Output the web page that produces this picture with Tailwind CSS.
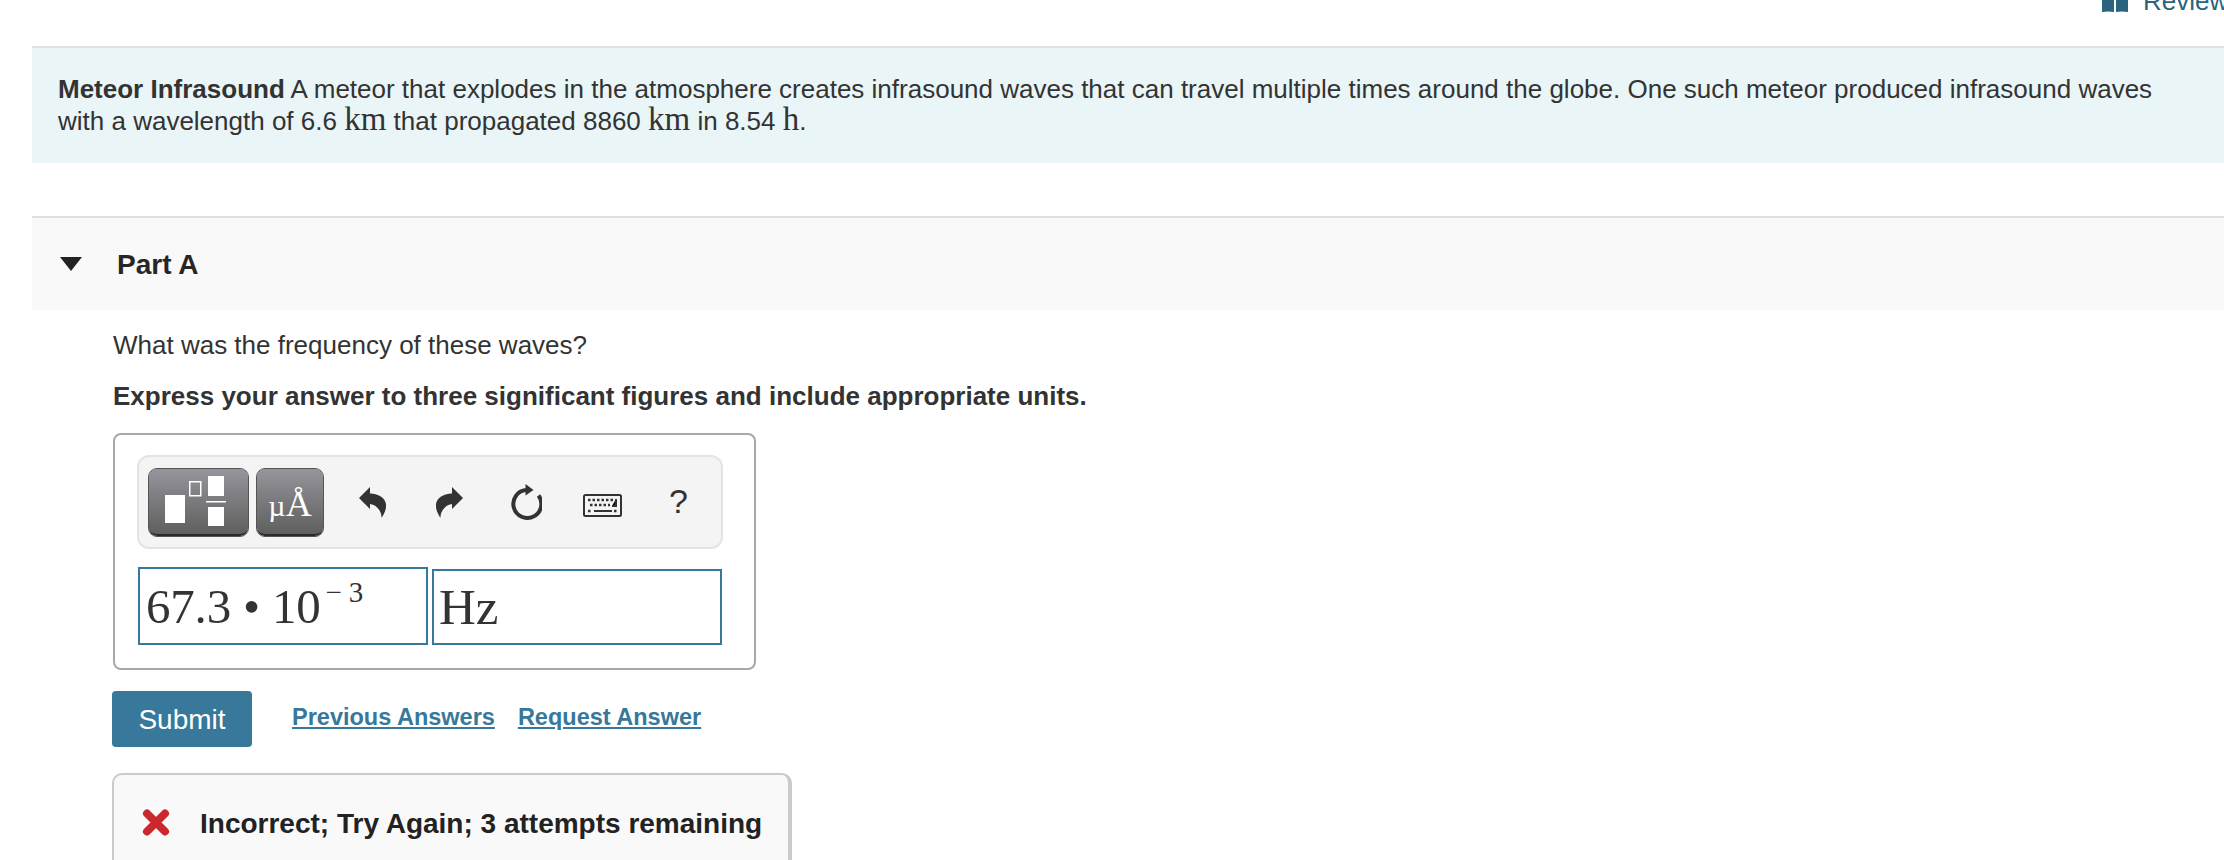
<!DOCTYPE html>
<html lang="en">
  <head>
    <meta charset="UTF-8" />
    <meta name="viewport" content="width=device-width, initial-scale=1.0" />
    <title>Part A</title>
    <script src="https://cdn.jsdelivr.net/npm/@tailwindcss/browser@4"></script>
  </head>
  <body class="bg-white">
    <div class="h-[860px] w-[2224px] overflow-hidden pl-[32px] font-['Liberation_Sans',Arial,sans-serif] text-[26px] leading-[33px] text-[#333]">
      <!-- review link, cut off by the top and right of the window -->
      <div class="flex h-[46px] overflow-hidden pl-[2070px]">
        <div class="-mt-[15px] flex shrink-0 items-start gap-[15px] text-[#2b6480]">
          <svg class="mt-[13px]" width="26" height="16" viewBox="0 0 26 16"><path fill="#2b6480" d="M0 0h12v14q-6-1-12 0zM14 0h12v14q-6-1-12 0z"/></svg>
          <span class="whitespace-nowrap">Review</span>
        </div>
      </div>

      <div class="h-[117px] border-t-2 border-[#dfe1e2] bg-[#e9f5f7] px-[26px] pt-[25px] leading-[32px]">
        <b>Meteor Infrasound</b> A meteor that explodes in the atmosphere creates infrasound waves that can travel multiple times around the globe. One such meteor produced infrasound waves<br />
        with a wavelength of 6.6 <span class="font-['Liberation_Serif',serif] text-[33px] leading-[0]">km</span> that propagated 8860 <span class="font-['Liberation_Serif',serif] text-[33px] leading-[0]">km</span> in 8.54 <span class="font-['Liberation_Serif',serif] text-[33px] leading-[0]">h</span>.
      </div>

      <div class="mt-[53px] flex h-[94px] items-center border-t-2 border-[#e0e0e0] bg-[#f9f9f9] pl-[28px]">
        <svg width="22" height="14" viewBox="0 0 22 14"><path fill="#222" d="M0 0h22L11 14z"/></svg>
        <b class="ml-[35px] text-[28px] text-[#262626]">Part A</b>
      </div>

      <div class="pl-[81px]">
        <p class="mt-[19px]">What was the frequency of these waves?</p>
        <p class="mt-[18px] font-bold">Express your answer to three significant figures and include appropriate units.</p>

        <div class="mt-[20px] h-[237px] w-[643px] rounded-[8px] border-2 border-[#a8a8a8] pl-[22px] pt-[20px]">
          <div class="flex h-[94px] w-[586px] items-center rounded-[12px] border-2 border-[#e4e4e4] bg-[#f4f4f4] pl-[10px]">
            <div class="h-[67px] w-[99px] rounded-[8px] border-b-2 border-[#2a2a2a] bg-gradient-to-b from-[#96959c] to-[#5f5f5f] outline outline-1 outline-[#555]">
              <svg width="99" height="65" viewBox="0 0 99 65">
                <path fill="#fff" d="M16 26h20v28H16zM59 7h16v20H59zM59 38h16v19H59zM57 32h20v1.500H57z"/>
                <path fill="none" stroke="#fff" stroke-width="1.500" d="M40.750 12.750h11v14h-11z"/>
              </svg>
            </div>
            <div class="ml-[9px] flex h-[67px] w-[66px] items-baseline justify-center rounded-[8px] border-b-2 border-[#2a2a2a] bg-gradient-to-b from-[#96959c] to-[#5f5f5f] font-['Liberation_Serif',serif] text-[36px] leading-[70px] text-white outline outline-1 outline-[#555]"><span class="text-[30px]">µ</span>Å</div>
            <svg class="ml-[36px]" width="27" height="31" viewBox="0 0 27 31"><path fill="#333" d="M0 11 11 0v6.500C22 7 28 13 27 20c-.3 4-2.500 8-4.500 11 .5-5-3.500-13-11.500-14v5z"/></svg>
            <svg class="ml-[50px]" width="27" height="31" viewBox="0 0 27 31"><path fill="#333" d="M27 11 16 0v6.500C5 7-1 13 0 20c.3 4 2.500 8 4.500 11-.5-5 3.500-13 11.500-14v5z"/></svg>
            <svg class="ml-[47px]" width="32" height="36" viewBox="0 0 32 36">
              <path fill="none" stroke="#333" stroke-width="4" d="M28.500 11.500A14 14 0 1 1 16 6"/>
              <path fill="#333" d="M15.500 0 23.500 6 15.500 11.500z"/>
            </svg>
            <svg class="mt-[6px] ml-[41px]" width="39" height="23" viewBox="0 0 39 23">
              <rect x="1" y="1" width="37" height="21" rx="1.500" fill="#f4f4f4" stroke="#333" stroke-width="2"/>
              <path stroke="#333" stroke-width="2.500" stroke-dasharray="2.500 2" d="M5 6h26M7 11h20M5 17h3M31 17h4"/>
              <path stroke="#333" stroke-width="2" d="M11 17h18M33 5v7h-4"/>
            </svg>
            <span class="-mt-[2px] ml-[47px] text-[34px] leading-none text-[#333]">?</span>
          </div>

          <div class="mt-[18px] -ml-[1px] flex font-['Liberation_Serif',serif] text-[49px] leading-[76px] text-[#333]">
            <div class="ml-[2px] h-[78px] w-[290px] border-2 border-[#37789b] pl-[6px] whitespace-nowrap tracking-[-0.2px]">67.3 • 10<sup class="ml-[5px] -top-[21px] text-[29px]">− 3</sup></div>
            <div class="mt-[2px] ml-[4px] h-[76px] w-[290px] border-2 border-[#37789b] pl-[5px] text-[51px] leading-[72px]">Hz</div>
          </div>
        </div>

        <div class="mt-[21px] flex items-center">
          <button class="-ml-[1px] h-[56px] w-[140px] rounded-[4px] bg-[#37789b] text-[28px] text-white">Submit</button>
          <a class="ml-[40px] -mt-[4px] text-[23.500px] font-bold text-[#37789b] underline">Previous Answers</a>
          <a class="ml-[23px] -mt-[4px] text-[23.500px] font-bold text-[#37789b] underline">Request Answer</a>
        </div>

        <div class="mt-[26px] -ml-[1px] flex h-[140px] w-[680px] items-start rounded-[10px] border-2 border-r-4 border-[#cacaca] bg-[#f9f9f9] pt-[32px] pl-[28px]">
          <svg class="mt-[2px]" width="28" height="27" viewBox="0 0 28 27"><path fill="none" stroke="#c9282d" stroke-width="8" stroke-linecap="round" d="M5 4.500 23 22.500M23 4.500 5 22.500"/></svg>
          <b class="ml-[30px] whitespace-nowrap text-[28px] text-[#222]">Incorrect; Try Again; 3 attempts remaining</b>
        </div>
      </div>
    </div>
  </body>
</html>
